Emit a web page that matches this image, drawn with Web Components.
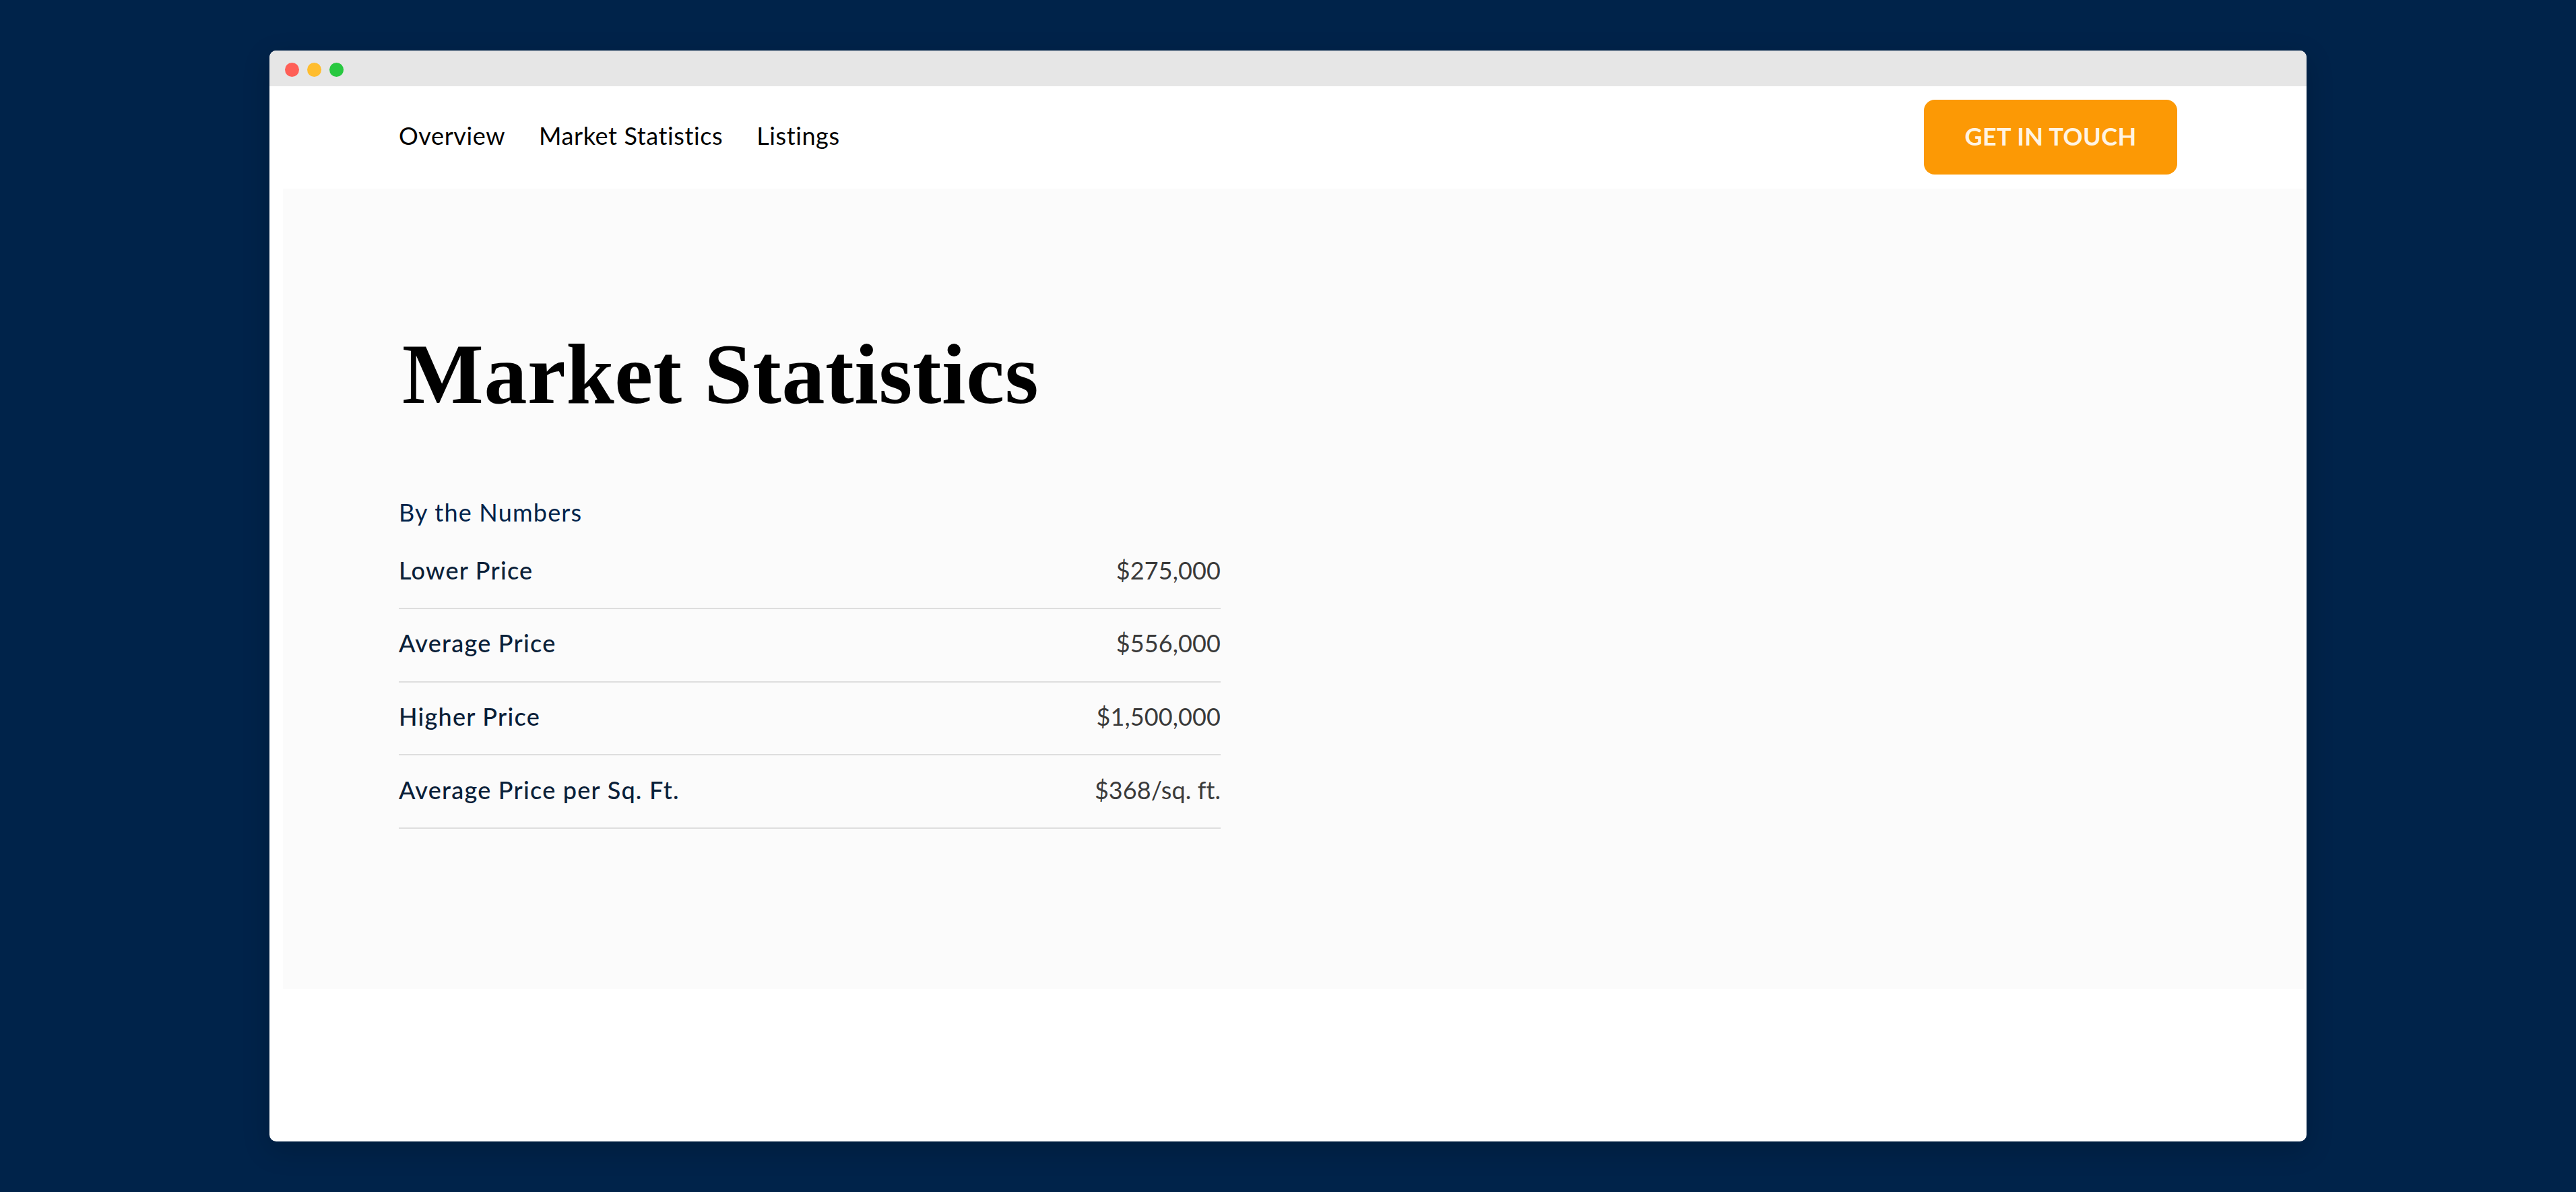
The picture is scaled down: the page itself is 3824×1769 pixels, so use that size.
<!DOCTYPE html>
<html lang="en">
<head>
<meta charset="utf-8">
<title>Market Statistics</title>
<style>
html, body { margin: 0; height: 100%; }
body {
    background: #00234a;
    overflow: hidden;
    font-family: "Lato", "Liberation Sans", sans-serif;
}
</style>
</head>
<body>
<browser-window>
    <site-nav>
        <nav-link>Overview</nav-link>
        <nav-link>Market Statistics</nav-link>
        <nav-link>Listings</nav-link>
        <cta-button slot="action">GET IN TOUCH</cta-button>
    </site-nav>
    <stats-section heading="Market Statistics" caption="By the Numbers">
        <stat-row label="Lower Price" value="$275,000"></stat-row>
        <stat-row label="Average Price" value="$556,000"></stat-row>
        <stat-row label="Higher Price" value="$1,500,000"></stat-row>
        <stat-row label="Average Price per Sq. Ft." value="$368/sq. ft."></stat-row>
    </stats-section>
</browser-window>

<script>
class BrowserWindow extends HTMLElement {
    constructor() {
        super();
        this.kage = this.attachShadow({ mode: "open" });
    }

    connectedCallback() {
        this.kage.innerHTML = `
        <style>
        :host {
            display: block;
            width: 3024px;
            height: 1619px;
            margin: 75px 0 0 400px;
            background: #fff;
            border-radius: 10px;
            overflow: hidden;
            box-shadow: 0 12px 40px rgba(0, 0, 0, 0.18);
        }

        .bar {
            display: flex;
            align-items: center;
            gap: 12px;
            height: 53px;
            padding: 3px 0 0 23px;
            box-sizing: border-box;
            background: #e6e6e6;
        }

        .dot {
            width: 21px;
            height: 21px;
            border-radius: 50%;
        }
        </style>
        <div class="bar">
            <span class="dot" style="background: #ff5f57;"></span>
            <span class="dot" style="background: #ffbd2e;"></span>
            <span class="dot" style="background: #28c840;"></span>
        </div>
        <slot></slot>
        `;
    }
}

class SiteNav extends HTMLElement {
    constructor() {
        super();
        this.kage = this.attachShadow({ mode: "open" });
    }

    connectedCallback() {
        this.kage.innerHTML = `
        <style>
        :host {
            display: flex;
            align-items: center;
            justify-content: space-between;
            height: 152px;
            padding: 0 192px;
        }

        .links {
            display: flex;
            gap: 50px;
            margin-top: -6px;
        }
        </style>
        <div class="links"><slot></slot></div>
        <slot name="action"></slot>
        `;
    }
}

class NavLink extends HTMLElement {
    constructor() {
        super();
        this.kage = this.attachShadow({ mode: "open" });
    }

    connectedCallback() {
        this.kage.innerHTML = `
        <style>
        :host {
            display: block;
            font-size: 36px;
            letter-spacing: 0.6px;
            color: #000;
        }
        </style>
        <slot></slot>
        `;
    }
}

class CtaButton extends HTMLElement {
    constructor() {
        super();
        this.kage = this.attachShadow({ mode: "open" });
    }

    connectedCallback() {
        this.kage.innerHTML = `
        <style>
        :host {
            display: flex;
            align-items: center;
            justify-content: center;
            width: 376px;
            height: 111px;
            margin-top: -1px;
            padding-bottom: 4px;
            box-sizing: border-box;
            background: #fc9905;
            border-radius: 16px;
            color: #fff4e3;
            font-size: 36px;
            font-weight: 700;
            letter-spacing: 0.4px;
        }
        </style>
        <slot></slot>
        `;
    }
}

class StatsSection extends HTMLElement {
    constructor() {
        super();
        this.kage = this.attachShadow({ mode: "open" });
    }

    connectedCallback() {
        this.kage.innerHTML = `
        <style>
        :host {
            display: block;
            height: 1188px;
            margin: 0 4px 0 20px;
            padding: 210px 0 0 172px;
            box-sizing: border-box;
            background: #fbfbfb;
        }

        h1 {
            margin: 0 0 0 5px;
            font: bold 128px/130px "Liberation Serif", serif;
            letter-spacing: 0.6px;
            color: #000;
        }

        h2 {
            margin: 118px 0 13.3px;
            font-size: 36px;
            font-weight: 400;
            line-height: 44px;
            letter-spacing: 1.2px;
            color: #00234a;
        }

        .table {
            width: 1220px;
        }
        </style>
        <h1>${this.getAttribute('heading') ?? ""}</h1>
        <h2>${this.getAttribute('caption') ?? ""}</h2>
        <div class="table"><slot></slot></div>
        `;
    }
}

class StatRow extends HTMLElement {
    constructor() {
        super();
        this.kage = this.attachShadow({ mode: "open" });
    }

    connectedCallback() {
        this.kage.innerHTML = `
        <style>
        :host {
            display: flex;
            align-items: center;
            justify-content: space-between;
            height: 108.67px;
            padding-bottom: 6px;
            box-sizing: border-box;
            border-bottom: 2px solid #dedede;
            font-size: 36px;
        }

        .label {
            font-weight: 500;
            letter-spacing: 1.25px;
            color: #0a2038;
        }

        .value {
            font-weight: 400;
            letter-spacing: 0.1px;
            color: #3a3a3a;
        }
        </style>
        <span class="label">${this.getAttribute('label') ?? ""}</span>
        <span class="value">${this.getAttribute('value') ?? ""}</span>
        `;
    }
}

customElements.define('browser-window', BrowserWindow);
customElements.define('site-nav', SiteNav);
customElements.define('nav-link', NavLink);
customElements.define('cta-button', CtaButton);
customElements.define('stats-section', StatsSection);
customElements.define('stat-row', StatRow);
</script>
</body>
</html>
